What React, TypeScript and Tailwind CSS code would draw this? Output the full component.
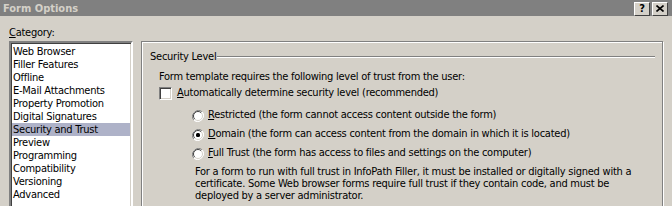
import React from "react";

const categories = [
  "Web Browser",
  "Filler Features",
  "Offline",
  "E-Mail Attachments",
  "Property Promotion",
  "Digital Signatures",
  "Security and Trust",
  "Preview",
  "Programming",
  "Compatibility",
  "Versioning",
  "Advanced",
];

function Radio({ checked }: { checked?: boolean }) {
  return (
    <svg width="12" height="12" viewBox="0 0 12 12" className="shrink-0">
      <circle cx="6" cy="6" r="5.5" fill="#ffffff" />
      <path d="M10.2 1.8 A6 6 0 0 0 1.8 10.2" fill="none" stroke="#808080" strokeWidth="1" />
      <path d="M9.2 2.8 A4.5 4.5 0 0 0 2.8 9.2" fill="none" stroke="#404040" strokeWidth="1" />
      <path d="M1.8 10.2 A6 6 0 0 0 10.2 1.8" fill="none" stroke="#ffffff" strokeWidth="1" />
      <path d="M2.8 9.2 A4.5 4.5 0 0 0 9.2 2.8" fill="none" stroke="#d4d0c8" strokeWidth="1" />
      {checked && <rect x="4" y="4" width="4" height="4" rx="1.5" fill="#000000" />}
    </svg>
  );
}

function Hotkey({ first, rest }: { first: string; rest: string }) {
  return (
    <span>
      <span className="underline underline-offset-[1px]">{first}</span>
      {rest}
    </span>
  );
}

export default function App() {
  return (
    <div
      className="w-[672px] h-[206px] overflow-hidden bg-[#d4d0c8] text-[11px] tracking-[-0.25px] text-black"
      style={{ fontFamily: "'DejaVu Sans Condensed', 'Liberation Sans', sans-serif" }}
    >
      {/* title bar */}
      <div className="h-[16px] bg-[#808080] flex items-center justify-between pl-[3px] pr-[4px]">
        <span className="font-bold text-[#d4d0c8] leading-none tracking-normal">Form Options</span>
        <div className="flex gap-[2px] mt-[1px]">
          <div className="w-[16px] h-[14px] bg-[#d4d0c8] border border-t-white border-l-white border-r-[#404040] border-b-[#404040] flex items-center justify-center font-bold text-[11px] leading-none">
            ?
          </div>
          <div className="w-[16px] h-[14px] bg-[#d4d0c8] border border-t-white border-l-white border-r-[#404040] border-b-[#404040] flex items-center justify-center">
            <svg width="8" height="7" viewBox="0 0 8 7">
              <path d="M0.5 0.5 L7.5 6.5 M7.5 0.5 L0.5 6.5" stroke="#000" strokeWidth="1.6" />
            </svg>
          </div>
        </div>
      </div>

      <div className="flex pl-[9px] pt-[10px]">
        {/* category column */}
        <div className="w-[124px] shrink-0">
          <div className="h-[15px] leading-[13px]">
            <Hotkey first="C" rest="ategory:" />
          </div>
          <div className="h-[200px] bg-white border-2 border-t-[#808080] border-l-[#808080] border-r-white border-b-white shadow-[inset_1px_1px_0_#404040,inset_-1px_-1px_0_#d4d0c8] pt-[2px] px-[1px]">
            {categories.map((c) => (
              <div
                key={c}
                className={`h-[13px] leading-[13px] pl-[1px] whitespace-nowrap ${c === "Security and Trust" ? "bg-[#aeb2c8]" : ""}`}
              >
                {c}
              </div>
            ))}
          </div>
        </div>

        {/* right panel */}
        <div className="ml-[8px] mt-[15px] w-[522px] h-[200px] border border-[#808080] shadow-[inset_1px_1px_0_#ffffff,1px_1px_0_#ffffff] pl-[8px] pr-[7px] pt-[8px]">
          <div className="flex items-center h-[14px]">
            <span className="whitespace-nowrap">Security Level</span>
            <div className="flex-1 ml-[1px] h-[2px] border-t border-t-[#808080] border-b border-b-white" />
          </div>
          <div className="pl-[9px]">
            <div className="h-[20px] leading-[26px] whitespace-nowrap">
              Form template requires the following level of trust from the user:
            </div>
            <div className="flex items-center h-[16px] mt-[1px] whitespace-nowrap">
              <div className="w-[13px] h-[13px] bg-white border border-t-[#808080] border-l-[#808080] border-r-white border-b-white shadow-[inset_1px_1px_0_#404040,inset_-1px_-1px_0_#d4d0c8] shrink-0" />
              <span className="ml-[5px]">
                <Hotkey first="A" rest="utomatically determine security level (recommended)" />
              </span>
            </div>
            <div className="pl-[33px] pt-[5px]">
              <div className="flex items-center h-[19px] whitespace-nowrap">
                <Radio />
                <span className="ml-[4px]">
                  <Hotkey first="R" rest="estricted (the form cannot access content outside the form)" />
                </span>
              </div>
              <div className="flex items-center h-[19px] whitespace-nowrap">
                <Radio checked />
                <span className="ml-[4px]">
                  <Hotkey first="D" rest="omain (the form can access content from the domain in which it is located)" />
                </span>
              </div>
              <div className="flex items-center h-[19px] whitespace-nowrap">
                <Radio />
                <span className="ml-[4px]">
                  <Hotkey first="F" rest="ull Trust (the form has access to files and settings on the computer)" />
                </span>
              </div>
              <div className="pl-[3px] leading-[12px] mt-[3px] whitespace-nowrap">
                For a form to run with full trust in InfoPath Filler, it must be installed or digitally signed with a
                <br />
                certificate. Some Web browser forms require full trust if they contain code, and must be
                <br />
                deployed by a server administrator.
              </div>
            </div>
          </div>
        </div>
      </div>
    </div>
  );
}
